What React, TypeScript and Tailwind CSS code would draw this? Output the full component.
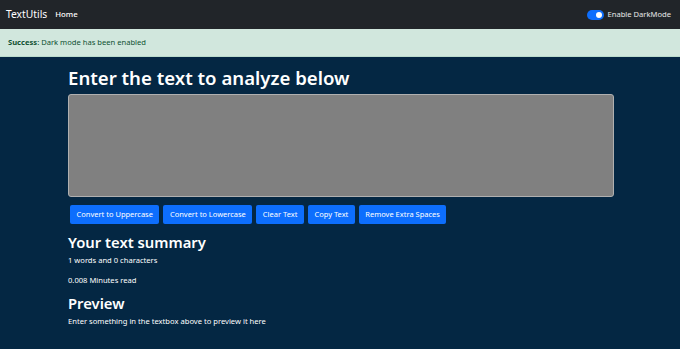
export default function App() {
  const font = { fontFamily: '"Noto Sans", "Open Sans", sans-serif' };
  return (
    <div className="min-h-screen bg-[#042743] text-white" style={font}>
      <nav className="h-[29px] bg-[#212529] flex items-center px-[6px]">
        <span className="text-[10.3px] text-white leading-none">TextUtils</span>
        <span className="ml-[8px] text-[7.8px] text-white font-medium leading-none">Home</span>
        <div className="ml-auto flex items-center gap-[4px] pr-[3px]">
          <div className="w-[17px] h-[10px] rounded-full bg-[#0d6efd] flex items-center justify-end pr-[2px]">
            <div className="w-[6px] h-[6px] rounded-full bg-white" />
          </div>
          <span className="text-[7.6px] text-white/90 leading-none">Enable DarkMode</span>
        </div>
      </nav>
      <div className="h-[28px] bg-[#d1e7dd] border-b border-[#badbcc] flex items-center px-[8px] text-[7.6px] text-[#0f5132]">
        <strong className="font-bold">Success</strong>: Dark mode has been enabled
      </div>
      <div className="w-[546px] ml-[68px]">
        <h1 className="mt-[7px] text-[18.6px] font-semibold leading-[28px]">Enter the text to analyze below</h1>
        <div className="mt-[2px] h-[103px] bg-[#808080] border border-[#b0b0b0] rounded-[3px]" />
        <div className="mt-[8px] flex gap-[4px] pl-[2px]">
          {["Convert to Uppercase", "Convert to Lowercase", "Clear Text", "Copy Text", "Remove Extra Spaces"].map((t) => (
            <button key={t} className="h-[19px] px-[6.5px] bg-[#0d6efd] text-white text-[7.5px] rounded-[2px] leading-none">
              {t}
            </button>
          ))}
        </div>
        <h2 className="mt-[7px] text-[14.8px] font-semibold leading-[22px]">Your text summary</h2>
        <p className="mt-[0px] text-[7.6px] leading-[14px]">1 words and 0 characters</p>
        <p className="mt-[6px] text-[7.6px] leading-[14px]">0.008 Minutes read</p>
        <h2 className="mt-[5px] text-[14.8px] font-semibold leading-[22px]">Preview</h2>
        <p className="mt-[0px] text-[7.6px] leading-[14px]">Enter something in the textbox above to preview it here</p>
      </div>
    </div>
  );
}
